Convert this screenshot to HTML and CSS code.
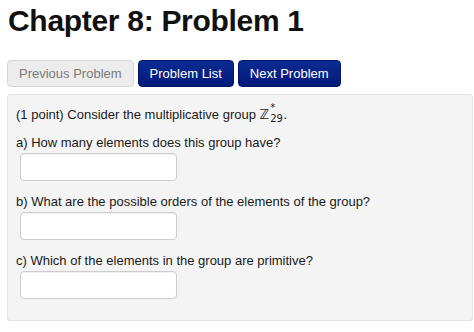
FILE: index.html
```html
<!DOCTYPE html>
<html lang="en">
<head>
    <meta charset="UTF-8">
    <meta name="viewport" content="width=device-width, initial-scale=1.0">
    <title>Chapter 8: Problem 1</title>
    <link rel="stylesheet" href="styles.css">
</head>
<body>
    <div class="page">
        <h1 class="page-title">Chapter 8: Problem 1</h1>

        <div class="problem-nav">
            <button class="nav-button disabled">Previous Problem</button>
            <button class="nav-button primary">Problem List</button>
            <button class="nav-button primary">Next Problem</button>
        </div>

        <div class="problem-body">
            <p class="intro">
                (1 point) Consider the multiplicative group
                <span class="math">ℤ<span class="supsub"><span class="sup">*</span><span class="sub">29</span></span>.</span>
            </p>

            <div class="question">
                <p>a) How many elements does this group have?</p>
                <input type="text" class="answer">
            </div>

            <div class="question">
                <p>b) What are the possible orders of the elements of the group?</p>
                <input type="text" class="answer">
            </div>

            <div class="question">
                <p>c) Which of the elements in the group are primitive?</p>
                <input type="text" class="answer">
            </div>
        </div>
    </div>
</body>
</html>
```

FILE: styles.css
```css
* {
    margin: 0;
    padding: 0;
    box-sizing: border-box;
}

body {
    font-family: "Liberation Sans", Arial, sans-serif;
    background: #ffffff;
    color: #1a1a1a;
}

.page {
    padding: 3px 1px 0 7px;
}

.page-title {
    font-size: 30px;
    line-height: 36px;
    font-weight: bold;
    letter-spacing: -0.3px;
    color: #111111;
    padding-left: 1px;
}

.problem-nav {
    display: flex;
    gap: 4px;
    margin-top: 21px;
}

.nav-button {
    font-family: inherit;
    font-size: 13px;
    height: 27px;
    padding: 0 11px;
    border-radius: 4px;
    border: 1px solid #c8c8c8;
    cursor: pointer;
}

.nav-button.disabled {
    background: #ececec;
    color: #7a7a7a;
    border-color: #d6d6d6;
    cursor: default;
}

.nav-button.primary {
    background: linear-gradient(to bottom, #0c2b92 0%, #03197a 100%);
    border-color: #021565;
    color: #ffffff;
}

.problem-body {
    margin-top: 7px;
    background: #f4f4f4;
    border: 1px solid #e3e3e3;
    border-radius: 3px;
    padding: 11px 8px 21px 8px;
    font-size: 13px;
    line-height: 18px;
}

.math {
    font-family: "DejaVu Sans", sans-serif;
    font-size: 13px;
}

/* stacked superscript / subscript next to the Z */
.supsub {
    display: inline-block;
    position: relative;
    width: 14px;
    height: 10px;
}

.sup,
.sub {
    position: absolute;
    left: 1px;
    font-size: 10px;
    line-height: 9px;
}

.sup {
    top: -6px;
}

.sub {
    top: 5px;
}

.question {
    margin-top: 12px;
}

.question:first-of-type {
    margin-top: 10px;
}

.answer {
    display: block;
    width: 157px;
    height: 28px;
    margin: 1px 0 0 4px;
    background: #ffffff;
    border: 1px solid #cccccc;
    border-radius: 4px;
    box-shadow: inset 0 1px 1px rgba(0, 0, 0, 0.06);
}
```
